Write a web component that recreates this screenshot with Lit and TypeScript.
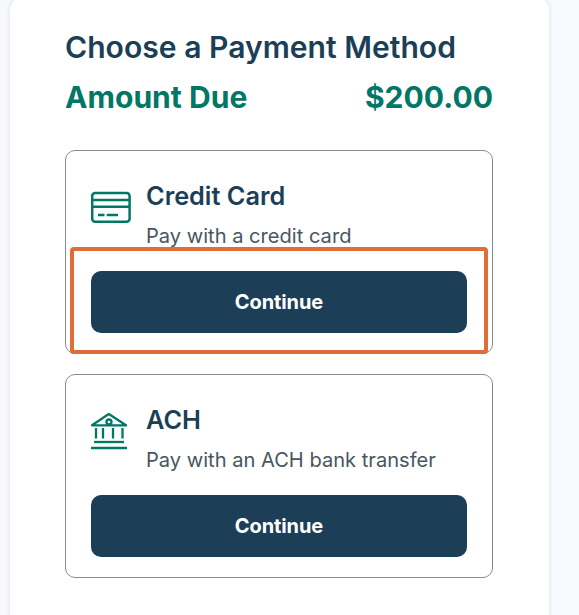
import { LitElement, html, css } from "lit";
import { customElement } from "lit/decorators.js";

@customElement("app-root")
export class AppRoot extends LitElement {
  static styles = css`
    :host {
      display: block;
      height: 615px;
      overflow: hidden;
      background: #f7f9fc;
      font-family: Inter, "Noto Sans", sans-serif;
    }
    .panel {
      box-sizing: border-box;
      width: 539px;
      height: 660px;
      margin: -5px 0 0 9.5px;
      padding: 34px 55.5px 0 55.5px;
      background: #fff;
      border-radius: 16px;
      box-shadow: 0 0 4px rgba(26, 61, 84, 0.14);
    }
    h1 {
      margin: 0;
      font-size: 30.1px;
      line-height: 36px;
      font-weight: 600;
      color: #1b3f57;
    }
    .due {
      display: flex;
      justify-content: space-between;
      margin: 14px 0 35px;
      font-size: 30.1px;
      line-height: 36px;
      font-weight: 700;
      color: #027766;
    }
    .options {
      display: flex;
      flex-direction: column;
      gap: 19.5px;
    }
    .option {
      position: relative;
      box-sizing: border-box;
      height: 204px;
      padding: 24px 25px 0;
      border: 1px solid #878c92;
      border-radius: 10px;
    }
    .head {
      display: flex;
      gap: 13px;
      height: 96px;
    }
    .icon {
      flex: none;
      width: 42px;
      height: 42px;
      margin-top: 14px;
      color: #027766;
    }
    .title {
      font-size: 25.3px;
      line-height: 42px;
      font-weight: 600;
      color: #1b3f57;
    }
    .sub {
      font-size: 20.1px;
      line-height: 28px;
      margin-top: 5px;
      color: #49565f;
    }
    button {
      display: block;
      width: 376px;
      height: 62px;
      padding: 0;
      border: 0;
      border-radius: 10px;
      background: #1c3f57;
      color: #fff;
      font: 700 20px Inter, "Noto Sans", sans-serif;
      letter-spacing: -0.1px;
    }
    .mark {
      position: absolute;
      left: 4px;
      top: 96px;
      width: 418px;
      height: 107px;
      box-sizing: border-box;
      border: 4px solid #e06c3a;
      border-radius: 4px;
      pointer-events: none;
    }
  `;

  render() {
    return html`
      <div class="panel">
        <h1>Choose a Payment Method</h1>
        <div class="due"><span>Amount Due</span><span>$200.00</span></div>
        <div class="options">
          <div class="option">
            <div class="head">
              <svg class="icon" viewBox="0 0 42 42" fill="none" stroke="currentColor" stroke-width="2.5">
                <rect x="1.2" y="4" width="37.4" height="28.8" rx="3" />
                <path d="M1.2 11H38.6M1.2 17.7H38.6" />
                <path d="M7 26H13.5M15.7 26H27" />
              </svg>
              <div>
                <div class="title">Credit Card</div>
                <div class="sub">Pay with a credit card</div>
              </div>
            </div>
            <button>Continue</button>
            <div class="mark"></div>
          </div>
          <div class="option">
            <div class="head">
              <svg class="icon" viewBox="0 0 42 42" fill="none" stroke="currentColor" stroke-width="2.3">
                <path d="M1 12.3L17.8 1L35 12.3Z" stroke-linejoin="round" />
                <circle cx="18" cy="9" r="2.5" />
                <path d="M5 15V25.5M12 15V25.5M22 15V25.5M31.5 15V25.5" />
                <path d="M3 29H33" />
                <path d="M0 35H36" />
              </svg>
              <div>
                <div class="title">ACH</div>
                <div class="sub">Pay with an ACH bank transfer</div>
              </div>
            </div>
            <button>Continue</button>
          </div>
        </div>
      </div>
    `;
  }
}
